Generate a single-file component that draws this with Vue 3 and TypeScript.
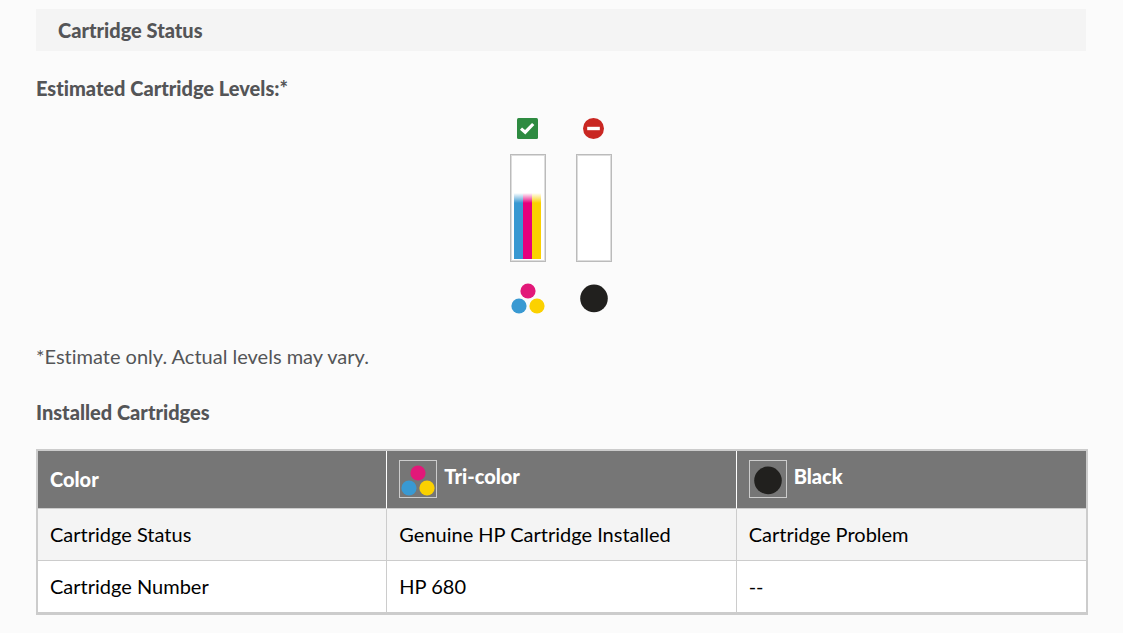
<script setup lang="ts">
interface Cartridge {
  name: string
  kind: 'tri' | 'black'
  ok: boolean
  level: number
  status: string
  number: string
}

const cartridges: Cartridge[] = [
  { name: 'Tri-color', kind: 'tri', ok: true, level: 65, status: 'Genuine HP Cartridge Installed', number: 'HP 680' },
  { name: 'Black', kind: 'black', ok: false, level: 0, status: 'Cartridge Problem', number: '--' },
]
</script>

<template>
  <main class="page">
    <h1 class="band">Cartridge Status</h1>
    <h2 class="heading">Estimated Cartridge Levels:*</h2>

    <div class="gauges">
      <div v-for="c in cartridges" :key="c.name" class="gauge">
        <svg v-if="c.ok" class="state" viewBox="0 0 22 21" aria-hidden="true">
          <rect width="21" height="21" rx="1.5" fill="#2e8b41" />
          <path d="M4 10.6 8.2 14.2 16.2 6" fill="none" stroke="#fff" stroke-width="3.2" />
        </svg>
        <svg v-else class="state" viewBox="0 0 22 21" aria-hidden="true">
          <circle cx="10.5" cy="10.5" r="10.5" fill="#c92722" />
          <rect x="4.2" y="8.8" width="12.6" height="3.4" fill="#fff" />
        </svg>
        <div class="tank">
          <div v-if="c.level > 0" class="ink" :style="{ height: c.level + '%' }"></div>
        </div>
        <svg class="dots" viewBox="0 0 36 36" aria-hidden="true">
          <template v-if="c.kind === 'tri'">
            <circle cx="18" cy="12" r="7.6" fill="#e21879" />
            <circle cx="9" cy="27" r="7.6" fill="#3999d2" />
            <circle cx="27" cy="27" r="7.6" fill="#fbd100" />
          </template>
          <circle v-else cx="18" cy="19.4" r="13.8" fill="#21201e" />
        </svg>
      </div>
    </div>

    <p class="note">*Estimate only. Actual levels may vary.</p>
    <h2 class="heading">Installed Cartridges</h2>

    <table class="installed">
      <thead>
        <tr>
          <th scope="col">Color</th>
          <th v-for="c in cartridges" :key="c.name" scope="col">
            <div class="label">
              <svg class="dots framed" viewBox="0 0 36 36" aria-hidden="true">
                <template v-if="c.kind === 'tri'">
                  <circle cx="18" cy="12" r="7.6" fill="#e21879" />
                  <circle cx="9" cy="27" r="7.6" fill="#3999d2" />
                  <circle cx="27" cy="27" r="7.6" fill="#fbd100" />
                </template>
                <circle v-else cx="18" cy="19.4" r="13.8" fill="#21201e" />
              </svg>
              <span>{{ c.name }}</span>
            </div>
          </th>
        </tr>
      </thead>
      <tbody>
        <tr>
          <td>Cartridge Status</td>
          <td v-for="c in cartridges" :key="c.name">{{ c.status }}</td>
        </tr>
        <tr>
          <td>Cartridge Number</td>
          <td v-for="c in cartridges" :key="c.name">{{ c.number }}</td>
        </tr>
      </tbody>
    </table>
  </main>
</template>

<style>
body {
  background: #fbfbfb;
}
</style>

<style scoped>
.page {
  padding: 9px 35px 18px 36px;
  font-family: "HP Simplified", Lato, "Liberation Sans", sans-serif;
  font-size: 20px;
  line-height: 24px;
  font-variant-ligatures: none;
  color: #545557;
}

.band {
  margin: 0 2px 0 0;
  padding: 9px 22px;
  background: #f4f4f4;
  font-size: 20px;
  font-weight: 900;
}

.heading {
  margin: 25px 0;
  font-size: 20px;
  font-weight: 900;
}

.gauges {
  display: flex;
  justify-content: center;
  gap: 30px;
  margin: -7px 2px 0 0;
}

.gauge {
  display: flex;
  flex-direction: column;
  align-items: center;
}

.state {
  width: 22px;
  height: 21px;
}

.tank {
  display: flex;
  flex-direction: column;
  justify-content: flex-end;
  box-sizing: border-box;
  width: 36px;
  height: 108px;
  margin: 15px 0 17px;
  padding: 3px 3px 2px;
  border: 1px solid #bbb;
  box-shadow: inset 1px 1px #ddd, inset -1px -1px #ddd;
  background: #fff;
}

.ink {
  width: 27px;
  background:
    linear-gradient(#fff, transparent 10px),
    linear-gradient(90deg, #3999d2 9px, #e6007c 9px 18px, #fbd100 18px);
}

.dots {
  width: 36px;
  height: 36px;
}

.note {
  margin: 29px 0 0;
}

.note + .heading {
  margin-top: 32px;
}

.installed {
  width: 100%;
  table-layout: fixed;
  border: 2px solid #ccc;
  border-spacing: 0;
  background: #fff;
  color: #000;
}

.installed th,
.installed td {
  padding: 13px 12px 14px;
  border-right: 1px solid #ccc;
  border-bottom: 1px solid #ccc;
  text-align: left;
}

.installed th {
  padding: 9px 12px 10px;
  border-right-color: #fff;
  background: #767676;
  color: #fff;
  font-weight: 900;
}

.installed th:last-child,
.installed td:last-child {
  border-right: 0;
}

.installed tbody tr:first-child {
  background: #f4f4f4;
}

.label {
  display: flex;
  gap: 7px;
}

.label span {
  padding-top: 4px;
}

.framed {
  flex: none;
  border: 1px solid #ccc;
}
</style>
